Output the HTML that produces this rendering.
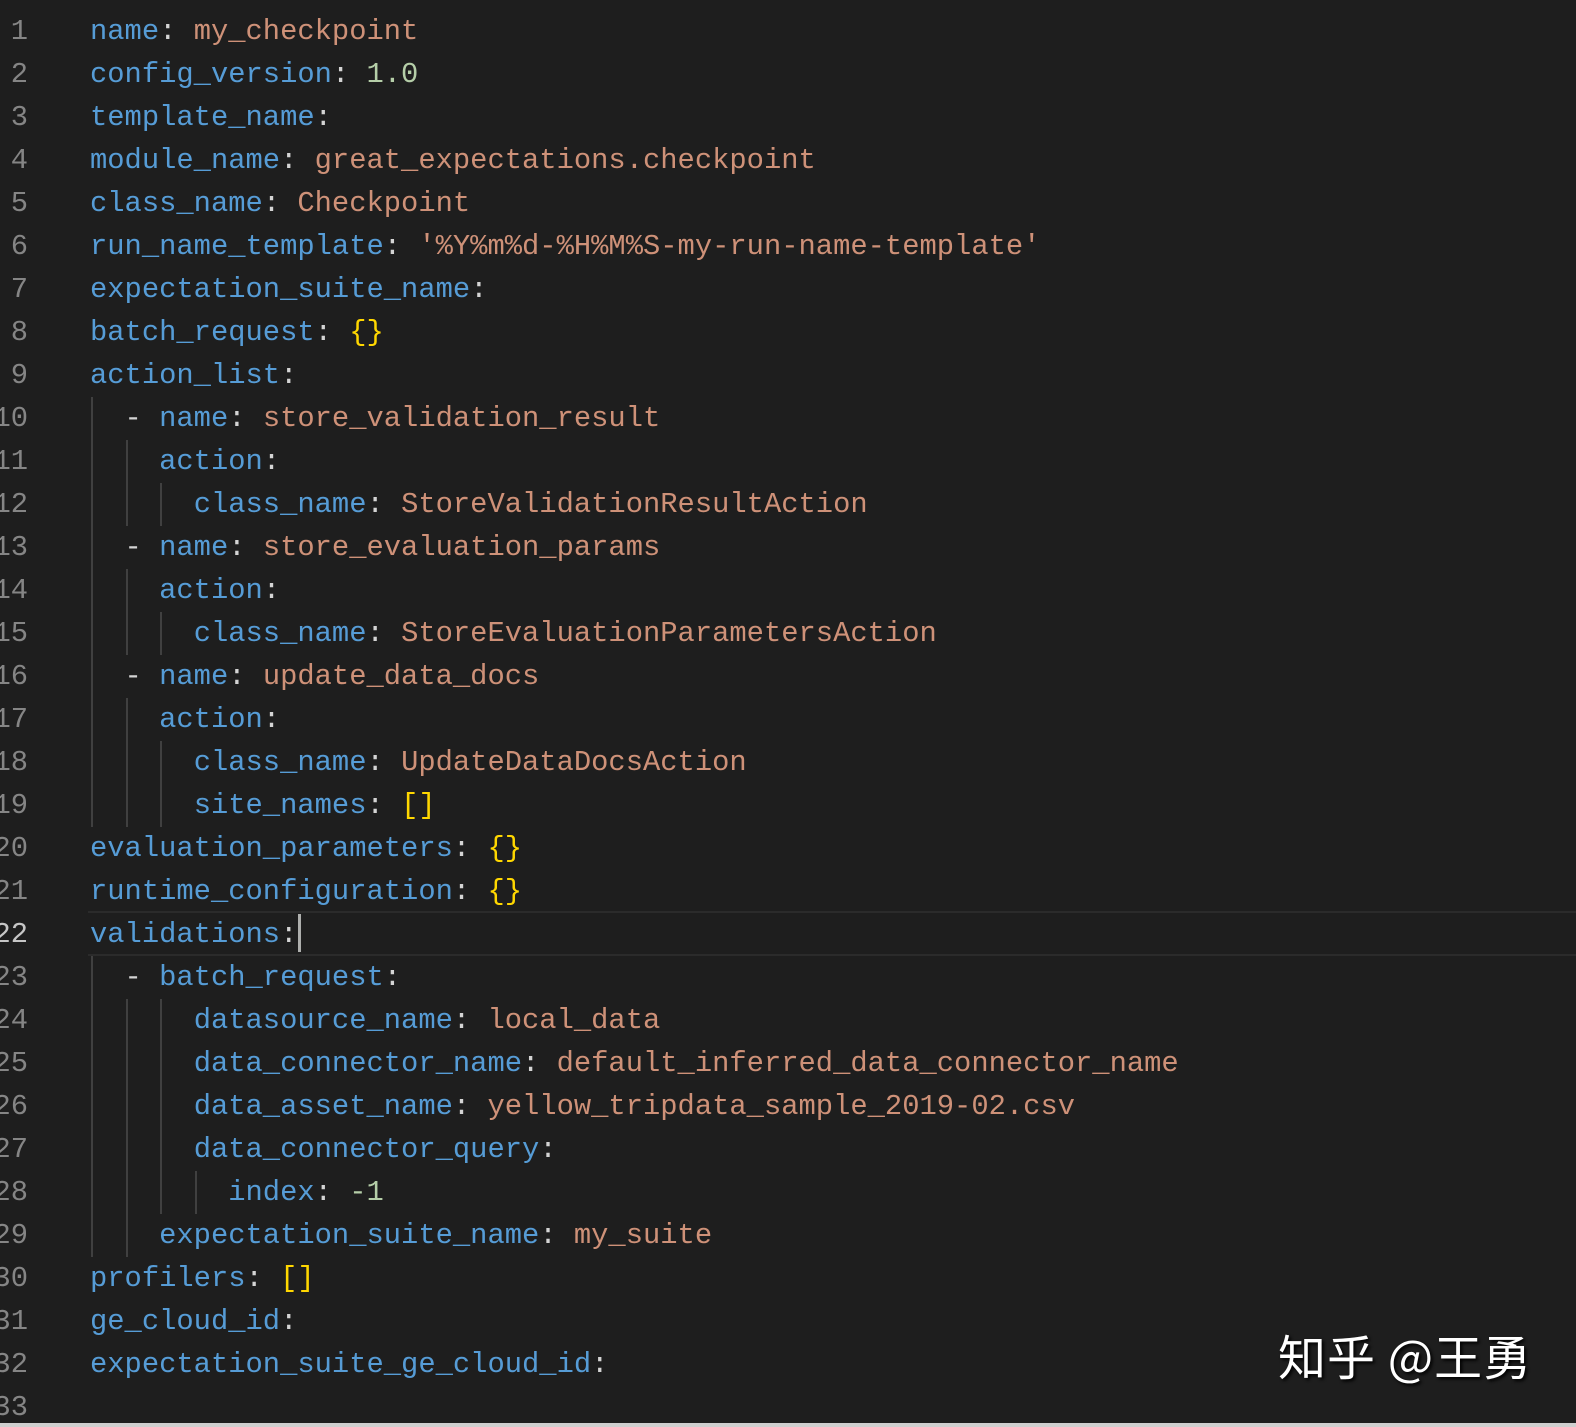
<!DOCTYPE html>
<html><head><meta charset="utf-8"><style>
html,body{margin:0;padding:0;background:#1e1e1e;width:1576px;height:1427px;overflow:hidden;position:relative}
pre{margin:0;font-family:"Liberation Mono",monospace;font-size:28.8px;line-height:43px;position:absolute;top:9.5px}
#code{left:90px;color:#d4d4d4}
#nums{left:-40px;width:68px;text-align:right;color:#858585}
.k{color:#569cd6}.s{color:#ce9178}.n{color:#b5cea8}.b{color:#ffd700}.p{color:#d4d4d4}
.g{position:absolute;width:2px;background:#404040}
#cur{position:absolute;left:88px;right:0;top:911px;height:41px;border-top:2px solid #2b2b2b;border-bottom:2px solid #2b2b2b}
#caret{position:absolute;left:298px;top:914px;width:3px;height:38px;background:#aeafad}
#wm{position:absolute;left:1278px;top:1322px;font-family:"Noto Sans CJK SC",sans-serif;font-size:48px;color:#fff;text-shadow:2px 2px 3px #000;white-space:nowrap;line-height:64px;letter-spacing:1px}
#bot{position:absolute;left:0;right:0;bottom:0;height:4px;background:#cfcfcf}
</style></head><body>
<div id="cur"></div>
<div class="g" style="left:91px;top:397px;height:430px"></div>
<div class="g" style="left:91px;top:956px;height:301px"></div>
<div class="g" style="left:126px;top:440px;height:86px"></div>
<div class="g" style="left:126px;top:569px;height:86px"></div>
<div class="g" style="left:126px;top:698px;height:129px"></div>
<div class="g" style="left:126px;top:999px;height:258px"></div>
<div class="g" style="left:160px;top:483px;height:43px"></div>
<div class="g" style="left:160px;top:612px;height:43px"></div>
<div class="g" style="left:160px;top:741px;height:86px"></div>
<div class="g" style="left:160px;top:999px;height:215px"></div>
<div class="g" style="left:195px;top:1171px;height:43px"></div>
<pre id="nums">1
2
3
4
5
6
7
8
9
10
11
12
13
14
15
16
17
18
19
20
21
<span style="color:#c6c6c6">22</span>
23
24
25
26
27
28
29
30
31
32
33</pre>
<pre id="code"><span class="k">name</span>: <span class="s">my_checkpoint</span>
<span class="k">config_version</span>: <span class="n">1.0</span>
<span class="k">template_name</span>:
<span class="k">module_name</span>: <span class="s">great_expectations.checkpoint</span>
<span class="k">class_name</span>: <span class="s">Checkpoint</span>
<span class="k">run_name_template</span>: <span class="s">'%Y%m%d-%H%M%S-my-run-name-template'</span>
<span class="k">expectation_suite_name</span>:
<span class="k">batch_request</span>: <span class="b">{}</span>
<span class="k">action_list</span>:
  - <span class="k">name</span>: <span class="s">store_validation_result</span>
    <span class="k">action</span>:
      <span class="k">class_name</span>: <span class="s">StoreValidationResultAction</span>
  - <span class="k">name</span>: <span class="s">store_evaluation_params</span>
    <span class="k">action</span>:
      <span class="k">class_name</span>: <span class="s">StoreEvaluationParametersAction</span>
  - <span class="k">name</span>: <span class="s">update_data_docs</span>
    <span class="k">action</span>:
      <span class="k">class_name</span>: <span class="s">UpdateDataDocsAction</span>
      <span class="k">site_names</span>: <span class="b">[]</span>
<span class="k">evaluation_parameters</span>: <span class="b">{}</span>
<span class="k">runtime_configuration</span>: <span class="b">{}</span>
<span class="k">validations</span>:
  - <span class="k">batch_request</span>:
      <span class="k">datasource_name</span>: <span class="s">local_data</span>
      <span class="k">data_connector_name</span>: <span class="s">default_inferred_data_connector_name</span>
      <span class="k">data_asset_name</span>: <span class="s">yellow_tripdata_sample_2019-02.csv</span>
      <span class="k">data_connector_query</span>:
        <span class="k">index</span>: <span class="n">-1</span>
    <span class="k">expectation_suite_name</span>: <span class="s">my_suite</span>
<span class="k">profilers</span>: <span class="b">[]</span>
<span class="k">ge_cloud_id</span>:
<span class="k">expectation_suite_ge_cloud_id</span>:
</pre>
<div id="caret"></div>
<div id="wm">知乎 @王勇</div>
<div id="bot"></div>
</body></html>
